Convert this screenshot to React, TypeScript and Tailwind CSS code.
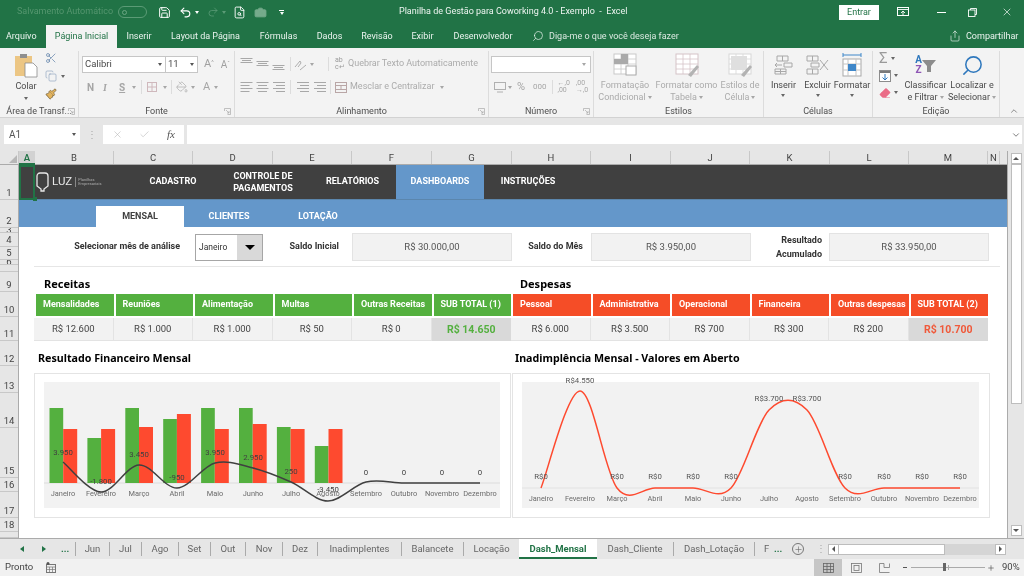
import { Camera, Check, ChevronDown, ChevronUp, Copy, Eraser, FileSearch, Paintbrush, PaintBucket, Plus, Redo2, Save, Scissors, Search, Share, Undo2, X } from 'lucide-react';

const ui = 'font-[Roboto,sans-serif]';

const months = ['Janeiro', 'Fevereiro', 'Março', 'Abril', 'Maio', 'Junho', 'Julho', 'Agosto', 'Setembro', 'Outubro', 'Novembro', 'Dezembro'];

// Excel style smoothing: catmull-rom turned into beziers
function smooth(p: number[][]) {
  let d = `M${p[0][0]} ${p[0][1]}`;
  for (let i = 0; i < p.length - 1; i++) {
    const a = p[Math.max(i - 1, 0)];
    const b = p[i];
    const c = p[i + 1];
    const e = p[Math.min(i + 2, p.length - 1)];
    d += ` C${b[0] + (c[0] - a[0]) / 6} ${b[1] + (c[1] - a[1]) / 6} ${c[0] - (e[0] - b[0]) / 6} ${c[1] - (e[1] - b[1]) / 6} ${c[0]} ${c[1]}`;
  }
  return d;
}

function Drop({ className = 'border-t-[#a6a6a6]' }: { className?: string }) {
  return <span className={`inline-block w-0 h-0 border-x-[2.5px] border-x-transparent border-t-[3px] ${className}`} />;
}

function Launcher() {
  return (
    <svg width="7" height="7" viewBox="0 0 7 7" className="absolute right-[3px] bottom-[2px]">
      <path d="M.5 3V.5H6.5V6.5H3.5M2 2l3 3M5 3v2H3" fill="none" stroke="#a9a9a9" strokeWidth=".7" />
    </svg>
  );
}

function Lines({ rows, align = 'left', tall = 14 }: { rows: number[]; align?: string; tall?: number }) {
  return (
    <svg width="13" height={tall} viewBox={`0 0 13 ${tall}`}>
      {rows.map((y, i) => {
        const w = i % 2 ? 9 : 12;
        const x = align === 'center' ? (13 - w) / 2 : align === 'right' ? 13 - w : 0.5;
        return <rect key={y} x={x} y={y} width={w} height="1" fill="#a8a8a8" />;
      })}
    </svg>
  );
}

function GridIcon({ tone = '#c9c9c9', fill = '#b5b5b5', children }: { tone?: string; fill?: string; children?: React.ReactNode }) {
  return (
    <svg width="24" height="24" viewBox="0 0 24 24">
      <rect x="1" y="1" width="22" height="20" fill="#fff" stroke={tone} strokeWidth="1" />
      <path d="M8 1v20M15 1v20M1 6h22M1 11h22M1 16h22" stroke={tone} strokeWidth=".8" />
      {children ?? <rect x="8" y="6" width="7" height="10" fill={fill} />}
    </svg>
  );
}

function Group({ w, title, launcher, children }: { w: string; title: string; launcher?: boolean; children: React.ReactNode }) {
  return (
    <div className={`relative ${w} h-full shrink-0 flex flex-col border-r border-[#dcdcdc]`}>
      <div className="flex-1 min-h-0">{children}</div>
      <div className="h-[11px] text-center text-[9px] leading-[11px] text-[#4d4d4d] whitespace-nowrap">{title}</div>
      {launcher && <Launcher />}
    </div>
  );
}

function BigButton({ w, lines, icon, dim, tail }: { w: string; lines: string[]; icon: React.ReactNode; dim?: boolean; tail?: boolean }) {
  return (
    <div className={`${w} shrink-0 flex flex-col items-center pt-[2px] text-[9px] leading-[12px] ${dim ? 'text-[#ababab]' : 'text-[#4a4a4a]'}`}>
      <div className="h-[24px] flex items-center justify-center">{icon}</div>
      <div className="mt-[2px] text-center whitespace-nowrap">{lines[0]}</div>
      <div className="text-center whitespace-nowrap flex items-center gap-[2px]">
        {lines[1]}
        {tail && <Drop />}
      </div>
    </div>
  );
}

function TitleBar() {
  return (
    <div className="h-[24px] flex items-center bg-[#217346] text-white text-[9px] relative">
      <span className="ml-[17px] w-[97px] whitespace-nowrap text-[#55966f]">Salvamento Automático</span>
      <span className="ml-[4px] w-[29px] h-[12px] rounded-full border border-[#5b9b76] flex items-center pl-[3px]">
        <span className="w-[5px] h-[5px] rounded-full border border-[#6aa582]" />
      </span>
      <Save size={13} strokeWidth={1.8} className="ml-[11px]" />
      <Undo2 size={13} strokeWidth={2} className="ml-[8px]" />
      <Drop className="ml-[3px] border-t-white" />
      <Redo2 size={12} strokeWidth={1.6} className="ml-[8px] text-[#5b9b76]" />
      <Drop className="ml-[3px] border-t-[#5b9b76]" />
      <FileSearch size={13} strokeWidth={1.7} className="ml-[7px]" />
      <Camera size={13} strokeWidth={1.7} className="ml-[8px] text-[#76ab8c]" fill="#76ab8c" />
      <span className="ml-[12px] flex flex-col items-center gap-[1px]">
        <span className="w-[5px] h-px bg-white" />
        <Drop className="border-t-white" />
      </span>
      <span className="ml-[115px] w-[232px] whitespace-nowrap text-[#eef5f1]">Planilha de Gestão para Coworking 4.0 - Exemplo&nbsp; -&nbsp; Excel</span>
      <span className="ml-[208px] w-[40px] h-[15px] bg-white text-[#217346] text-center leading-[15px]">Entrar</span>
      <svg width="12" height="10" viewBox="0 0 12 10" className="ml-[18px]" fill="none" stroke="#fff">
        <rect x=".5" y=".5" width="11" height="8" />
        <path d="M.5 2.5h11M6 8V4M4 6l2-2 2 2" strokeWidth=".9" />
      </svg>
      <span className="ml-[28px] w-[9px] h-px bg-white" />
      <svg width="9" height="9" viewBox="0 0 9 9" className="ml-[22px]" fill="none" stroke="#fff" strokeWidth=".9">
        <rect x=".5" y="2" width="6.5" height="6.5" />
        <path d="M2.5 2V.5H8.5V6.5H7" />
      </svg>
      <X size={12} strokeWidth={1.3} className="ml-[24px]" />
    </div>
  );
}

const tabs = [
  ['Inserir', 'w-[44px]'],
  ['Layout da Página', 'w-[89px]'],
  ['Fórmulas', 'w-[57px]'],
  ['Dados', 'w-[45px]'],
  ['Revisão', 'w-[50px]'],
  ['Exibir', 'w-[41px]'],
  ['Desenvolvedor', 'w-[80px]'],
];

function TabRow() {
  return (
    <div className="h-[24px] flex items-stretch bg-[#217346] text-[#eaf3ee] text-[9px]">
      <span className="ml-[6px] w-[40px] leading-[24px] whitespace-nowrap">Arquivo</span>
      <span className="w-[71px] mt-px bg-[#f3f3f3] text-[#217346] text-center leading-[23px] whitespace-nowrap">Página Inicial</span>
      {tabs.map(([t, w]) => (
        <span key={t} className={`${w} text-center leading-[24px] whitespace-nowrap`}>{t}</span>
      ))}
      <Search size={12} strokeWidth={1.4} className="ml-[9px] mt-[6px] -scale-x-100" />
      <span className="ml-[5px] w-[130px] leading-[24px] whitespace-nowrap text-[#dbe9e1]">Diga-me o que você deseja fazer</span>
      <Share size={12} strokeWidth={1.3} className="ml-[270px] mt-[6px]" />
      <span className="ml-[5px] leading-[24px] whitespace-nowrap">Compartilhar</span>
    </div>
  );
}

function Ribbon() {
  return (
    <div className="h-[70px] flex bg-[#f3f3f3] border-b border-[#d2d2d2] pt-[3px]">
      <Group w="w-[79px]" title="Área de Transf..." launcher>
        <div className="flex">
          <div className="w-[44px] flex flex-col items-center pt-[2px] pl-[8px] text-[9px] text-[#4a4a4a] leading-[12px]">
            <svg width="24" height="25" viewBox="0 0 24 25">
              <rect x="1" y="3" width="17" height="20" fill="#ecc684" />
              <rect x="6" y="1" width="7" height="4" fill="#8f8f8f" />
              <path d="M11 10h8l4 4v10H11z" fill="#fff" stroke="#8a8a8a" strokeWidth=".8" />
            </svg>
            <span className="mt-[2px]">Colar</span>
            <Drop className="mt-[5px] border-t-[#666]" />
          </div>
          <div className="flex flex-col items-start gap-[6px] pl-[1px] pt-[1px]">
            <Scissors size={12} strokeWidth={1.4} className="text-[#5d7fa8]" />
            <div className="flex items-center gap-[4px]"><Copy size={12} strokeWidth={1.1} className="text-[#7a95b3]" /><Drop className="border-t-[#666]" /></div>
            <Paintbrush size={12} strokeWidth={1.4} fill="#e3b35c" className="text-[#6d5a36]" />
          </div>
        </div>
      </Group>

      <Group w="w-[156px]" title="Fonte" launcher>
        <div className="pl-[3px] pt-[5px] text-[#4a4a4a]">
          <div className="flex items-center h-[17px] text-[9.5px]">
            <span className="w-[84px] h-full bg-white border border-[#c6c6c6] flex items-center justify-between px-[2px] pr-[3px]">Calibri <Drop className="border-t-[#555]" /></span>
            <span className="w-[32px] h-full bg-white border border-l-0 border-[#c6c6c6] flex items-center justify-between px-[2px] pr-[3px]">11 <Drop className="border-t-[#555]" /></span>
            <span className="ml-[6px] text-[11px] text-[#a0a0a0]">A<sup className="text-[6px]">^</sup></span>
            <span className="ml-[7px] text-[10px] text-[#a0a0a0]">A<sup className="text-[6px]">ˇ</sup></span>
          </div>
          <div className="flex items-center h-[16px] mt-[6px] text-[10px] text-[#a6a6a6] font-bold">
            <span className="ml-[5px] w-[16px]">N</span>
            <span className="w-[16px] italic font-['Liberation_Serif',serif]">I</span>
            <span className="w-[13px] underline">S</span>
            <Drop />
            <span className="ml-[5px] mr-[5px] w-px h-[14px] bg-[#dcdcdc]" />
            <svg width="10" height="10" viewBox="0 0 10 10" fill="none" stroke="#cfb8bc"><rect x=".5" y=".5" width="9" height="9" /><path d="M5 0v10M0 5h10" /></svg>
            <Drop className="ml-[6px] border-t-[#a6a6a6]" />
            <span className="ml-[4px] mr-[4px] w-px h-[14px] bg-[#dcdcdc]" />
            <PaintBucket size={12} strokeWidth={1.3} className="text-[#a6a6a6]" />
            <Drop className="ml-[3px] border-t-[#a6a6a6]" />
            <span className="ml-[8px] text-[11px] font-normal">A</span>
            <Drop className="ml-[4px] border-t-[#a6a6a6]" />
          </div>
        </div>
      </Group>

      <Group w="w-[254px]" title="Alinhamento" launcher>
        <div className="pl-[5px] pt-[3px] text-[9px] text-[#ababab] whitespace-nowrap">
          <div className="flex items-center h-[20px]">
            <span className="flex gap-[3px]">
              <Lines rows={[1, 3, 5]} align="center" />
              <Lines rows={[4, 6, 8]} align="center" />
              <Lines rows={[8, 10, 12]} align="center" />
            </span>
            <span className="ml-[5px] mr-[3px] w-px h-[14px] bg-[#dcdcdc]" />
            <svg width="13" height="13" viewBox="0 0 13 13" fill="none" stroke="#a6a6a6"><path d="M1 9l5-6 1 2-3 4M6 12l6-5" strokeWidth=".9" /></svg>
            <Drop className="ml-[3px] border-t-[#a6a6a6]" />
            <span className="ml-[14px] mr-[6px] w-px h-[14px] bg-[#dcdcdc]" />
            <span className="w-[10px] text-[7px] leading-[7px] text-[#9b9b9b]">ab<br />c↵</span>
            <span className="ml-[3px]">Quebrar Texto Automaticamente</span>
          </div>
          <div className="flex items-center h-[20px] mt-[3px]">
            <span className="flex gap-[3px]">
              <Lines rows={[2, 5, 8, 11]} />
              <Lines rows={[2, 5, 8, 11]} align="center" />
              <Lines rows={[2, 5, 8, 11]} align="right" />
            </span>
            <span className="ml-[5px] mr-[5px] w-px h-[14px] bg-[#dcdcdc]" />
            <span className="flex gap-[4px]">
              <Lines rows={[2, 5, 8, 11]} align="right" />
              <Lines rows={[2, 5, 8, 11]} align="right" />
            </span>
            <span className="ml-[4px] mr-[4px] w-px h-[14px] bg-[#dcdcdc]" />
            <svg width="12" height="11" viewBox="0 0 12 11" fill="none" stroke="#b9a6a6"><rect x=".5" y=".5" width="11" height="10" /><path d="M0 3.5h12M0 7.5h12M6 3.5v4" /></svg>
            <span className="ml-[3px]">Mesclar e Centralizar</span>
            <Drop className="ml-[6px] border-t-[#a6a6a6]" />
          </div>
        </div>
      </Group>

      <Group w="w-[105px]" title="Número" launcher>
        <div className="pl-[2px] pt-[5px] text-[#a6a6a6]">
          <div className="w-[100px] h-[17px] bg-white border border-[#c6c6c6] flex items-center justify-end pr-[4px]"><Drop /></div>
          <div className="flex items-center h-[16px] mt-[6px] text-[10px]">
            <svg width="12" height="11" viewBox="0 0 12 11" fill="none" stroke="#b0b0b0" className="ml-[3px]"><rect x=".5" y=".5" width="11" height="7" /><path d="M3 10h6" /></svg>
            <Drop className="ml-[2px] border-t-[#a6a6a6]" />
            <span className="ml-[5px] text-[11px]">%</span>
            <span className="ml-[8px] text-[8px]">000</span>
            <span className="ml-[5px] mr-[5px] w-px h-[14px] bg-[#dcdcdc]" />
            <span className="text-[7px] leading-[7px]">←,0<br />,00</span>
            <span className="ml-[6px] text-[7px] leading-[7px]">,00<br />→,0</span>
          </div>
        </div>
      </Group>

      <Group w="w-[170px]" title="Estilos">
        <div className="flex pl-[1px]">
          <BigButton w="w-[60px]" dim tail lines={['Formatação', 'Condicional']} icon={<GridIcon><rect x="8" y="1" width="7" height="5" fill="#aaa" /><rect x="1" y="6" width="14" height="5" fill="#aaa" /><rect x="13" y="13" width="10" height="9" fill="#fff" stroke="#aaa" /></GridIcon>} />
          <BigButton w="w-[63px]" dim tail lines={['Formatar como', 'Tabela']} icon={<GridIcon tone="#d5c4c8" fill="#e6dfe2"><path d="M13 22l9-10 2 2-8 10z" fill="#b3b3b3" /></GridIcon>} />
          <BigButton w="w-[44px]" dim tail lines={['Estilos de', 'Célula']} icon={<GridIcon tone="#d7d7d7"><rect x="3" y="3" width="16" height="14" fill="#dfdfdf" /><path d="M13 22l9-10 2 2-8 10z" fill="#b3b3b3" /></GridIcon>} />
        </div>
      </Group>

      <Group w="w-[109px]" title="Células">
        <div className="flex pl-[1px]">
          <BigButton w="w-[37px]" lines={['Inserir', '']} icon={
            <svg width="20" height="20" viewBox="0 0 20 20" fill="none" stroke="#a8a8a8"><path d="M3 1h11v5H3zM8.500 1v5M1 14h11v5H1zM6.500 14v5M1 16.500h11" /><path d="M10 8h8v4h-8zM1 10h7M3 8l-2 2 2 2" /></svg>
          } />
          <BigButton w="w-[31px]" lines={['Excluir', '']} icon={
            <svg width="24" height="20" viewBox="0 0 24 20" fill="none" stroke="#a8a8a8"><path d="M1 1h11v5H1zM6.500 1v5M1 14h11v5H1zM6.500 14v5M5 8h8v4H5zM14 5l8 10M22 5l-8 10" /></svg>
          } />
          <BigButton w="w-[38px]" lines={['Formatar', '']} icon={
            <svg width="22" height="24" viewBox="0 0 22 24"><path d="M2 2h18M2 0v4M20 0v4" stroke="#3f87c9" fill="none" /><rect x="2" y="6" width="18" height="17" fill="#fff" stroke="#a9a9a9" /><path d="M7 6v17M15 6v17M2 11h18M2 17h18" stroke="#c4c4c4" /><rect x="7" y="11" width="8" height="7" fill="#3f87c9" /></svg>
          } />
        </div>
        <div className="absolute left-0 top-[43px] w-full flex">
          <span className="w-[38px] flex justify-center"><Drop className="border-t-[#666]" /></span>
          <span className="w-[31px] flex justify-center"><Drop className="border-t-[#666]" /></span>
          <span className="w-[38px] flex justify-center"><Drop className="border-t-[#666]" /></span>
        </div>
      </Group>

      <Group w="w-[127px]" title="Edição">
        <div className="flex pl-[6px]">
          <div className="w-[23px] flex flex-col gap-[2px]">
            <div className="flex items-center gap-[3px] h-[15px]"><span className="text-[15px] leading-none text-[#9a9a9a]">Σ</span><Drop className="border-t-[#666]" /></div>
            <div className="flex items-center gap-[3px] h-[15px]">
              <svg width="12" height="12" viewBox="0 0 12 12"><rect x=".5" y=".5" width="11" height="11" fill="#fff" stroke="#8c8c8c" /><rect x="1" y="1" width="10" height="2" fill="#7a7a7a" /><path d="M6 4v6M3.500 7.500L6 10l2.500-2.500" stroke="#2f78bd" fill="none" /></svg>
              <Drop className="border-t-[#666]" />
            </div>
            <div className="flex items-center gap-[3px] h-[15px]"><Eraser size={12} fill="#ea6b86" strokeWidth={1} className="text-[#ea6b86]" /><Drop className="border-t-[#666]" /></div>
          </div>
          <BigButton w="w-[47px]" lines={['Classificar', 'e Filtrar']} tail icon={
            <span className="relative flex items-center">
              <span className="font-bold text-[10px] leading-[10px] text-center"><span className="text-[#2f78bd]">A</span><br /><span className="text-[#8e55b5]">Z</span></span>
              <svg width="14" height="13" viewBox="0 0 14 13"><path d="M0 1h14L9 7v6H5V7z" fill="#8c8c8c" /></svg>
            </span>
          } />
          <BigButton w="w-[46px]" lines={['Localizar e', 'Selecionar']} tail icon={<Search size={23} strokeWidth={1.6} className="-scale-x-100 text-[#2f78bd]" />} />
        </div>
      </Group>
      <div className="flex-1 relative">
        <ChevronUp size={10} strokeWidth={2} className="absolute left-[9px] bottom-[1px] text-[#777]" />
      </div>
    </div>
  );
}

function FormulaBar() {
  return (
    <div className="h-[33px] bg-[#e6e6e6] flex items-center pl-[4px] pr-[2px] text-[10px] text-[#555]">
      <span className="w-[76px] h-[19px] bg-white flex items-center justify-between pl-[5px] pr-[4px]">A1 <Drop className="border-t-[#555]" /></span>
      <span className="w-[23px] text-center text-[#aaa] leading-[5px] text-[10px]">⋮</span>
      <span className="w-[81px] h-[19px] bg-white flex items-center pl-[9px]">
        <X size={11} strokeWidth={1.2} className="text-[#b3b3b3]" />
        <Check size={11} strokeWidth={1.2} className="ml-[16px] text-[#b3b3b3]" />
        <span className="ml-[17px] italic font-['Liberation_Serif',serif] text-[11px]">fx</span>
      </span>
      <span className="ml-[3px] flex-1 h-[19px] bg-white flex items-center justify-end pr-[1px]"><ChevronDown size={10} className="text-[#666]" /></span>
    </div>
  );
}

const cols = [['B', 79], ['C', 79], ['D', 80], ['E', 79], ['F', 80], ['G', 80], ['H', 79], ['I', 80], ['J', 79], ['K', 80], ['L', 79], ['M', 79]] as const;
const colW: Record<number, string> = { 79: 'w-[79px]', 80: 'w-[80px]' };

function ColumnHeader() {
  return (
    <div className="h-[14px] flex bg-[#e6e6e6] text-[9.5px] leading-[13px] text-[#444] border-b border-[#ababab]">
      <span className="w-[19px] relative border-r border-[#c8c8c8]">
        <span className="absolute right-[1px] bottom-[1px] w-0 h-0 border-l-[8px] border-l-transparent border-b-[8px] border-b-[#b7b7b7]" />
      </span>
      <span className="w-[16px] bg-[#d2d2d2] border-b-2 border-[#217346] text-[#217346] text-center font-semibold h-[14px]">A</span>
      {cols.map(([c, w]) => (
        <span key={c} className={`${colW[w]} text-center border-r border-[#c8c8c8]`}>{c}</span>
      ))}
      <span className="w-[12px] text-center border-r border-[#c8c8c8]">N</span>
      <span className="flex-1" />
    </div>
  );
}

const rowHeads: [string, string][] = [
  ['1', 'h-[35px] leading-[12px]'], ['2', 'h-[28px] leading-[12px]'], ['3', 'h-[5px] leading-[5px]'], ['4', 'h-[14px] leading-[12px]'], ['5', 'h-[13px] leading-[12px]'], ['6', 'h-[5px] leading-[5px]'],
  ['', 'h-[7px]'], ['9', 'h-[20px] leading-[12px]'], ['10', 'h-[25px] leading-[12px]'], ['11', 'h-[24px] leading-[12px]'], ['12', 'h-[25px] leading-[12px]'], ['13', 'h-[27px] leading-[12px]'],
  ['14', 'h-[35px] leading-[12px]'], ['15', 'h-[50px] leading-[12px]'], ['16', 'h-[14px] leading-[12px]'], ['17', 'h-[26px] leading-[12px]'], ['18', 'h-[14px] leading-[12px]'], ['', 'h-[6px]'],
];

function RowHeaders() {
  return (
    <div className="w-[19px] shrink-0 bg-[#e6e6e6] border-r border-[#ababab] text-[9.5px] text-[#444] overflow-hidden">
      {rowHeads.map(([n, h], i) => (
        <div key={i} className={`${h} border-b border-[#c8c8c8] flex items-end justify-center overflow-hidden`}>{n}</div>
      ))}
    </div>
  );
}

const receitas = [['Mensalidades', 'R$ 12.600'], ['Reuniões', 'R$ 1.000'], ['Alimentação', 'R$ 1.000'], ['Multas', 'R$ 50'], ['Outras Receitas', 'R$ 0']];
const despesas = [['Pessoal', 'R$ 6.000'], ['Administrativa', 'R$ 3.500'], ['Operacional', 'R$ 700'], ['Financeira', 'R$ 300'], ['Outras despesas', 'R$ 200']];

function Kpi({ value }: { value: string }) {
  return <div className="w-[160px] h-[28px] bg-[#f2f2f2] border border-[#e3e3e3] flex items-center justify-center text-[9.5px] font-normal text-[#555]">{value}</div>;
}

function ResultChart() {
  const bars = [[408, 429], [438, 429], [408, 427], [419, 414], [408, 429], [408, 424], [427, 429], [446, 429]];
  const line = [[63, 462], [101, 492], [139, 465], [177, 488], [215, 463], [253, 468], [291, 482], [328, 501], [366, 482], [404, 483], [442, 483], [480, 483]];
  const labels = [['3.950', 452], ['-1.800', 481], ['3.450', 454], ['-950', 477], ['3.950', 452], ['2.950', 457], ['250', 471], ['-3.450', 489], ['0', 472], ['0', 472], ['0', 472], ['0', 472]] as const;
  return (
    <svg width="477" height="145" viewBox="34 373 477 145" className="bg-white outline outline-1 -outline-offset-1 outline-[#e4e4e4]">
      <rect x="44" y="382" width="456" height="126" fill="#f2f2f2" />
      <line x1="44" x2="500" y1="483" y2="483" stroke="#dcdcdc" />
      {bars.map(([g, r], i) => (
        <g key={i}>
          <rect x={49.5 + i * 37.9} y={g} width="13.7" height={483 - g} fill="#54b03f" />
          <rect x={63.2 + i * 37.9} y={r} width="14" height={483 - r} fill="#fe4a2f" />
        </g>
      ))}
      {labels.map(([t, y], i) => (
        <text key={i} x={line[i][0]} y={y + 3} textAnchor="middle" fontSize="7.8" fill="#404040">{t}</text>
      ))}
      {months.map((m, i) => (
        <text key={m} x={line[i][0]} y="496" textAnchor="middle" fontSize="7.4" fill="#6b6b6b">{m}</text>
      ))}
      <path d={smooth(line)} fill="none" stroke="#404040" strokeWidth="1.500" />
    </svg>
  );
}

function DebtChart() {
  const xs = [541, 580, 617, 655, 693, 731, 769, 807, 845, 884, 922, 960];
  const ys = [488, 391, 488, 488, 488, 488, 410, 410, 488, 488, 488, 488];
  const line = xs.map((x, i) => [x, ys[i]]);
  return (
    <svg width="478" height="145" viewBox="512 373 478 145" className="bg-white outline outline-1 -outline-offset-1 outline-[#e4e4e4]">
      <rect x="522" y="382" width="457" height="126" fill="#f2f2f2" />
      <line x1="522" x2="979" y1="488" y2="488" stroke="#e2e2e2" />
      <path d={smooth(line)} fill="none" stroke="#fe4a2f" strokeWidth="1.500" />
      {xs.map((x, i) => {
        const big = ys[i] !== 488;
        return (
          <text key={x} x={x} y={i === 1 ? 383 : big ? 401 : 479} textAnchor="middle" fontSize="7.8" fill="#555">
            {i === 1 ? 'R$4.550' : big ? 'R$3.700' : 'R$0'}
          </text>
        );
      })}
      {months.map((m, i) => (
        <text key={m} x={xs[i]} y="501" textAnchor="middle" fontSize="7.4" fill="#6b6b6b">{m}</text>
      ))}
    </svg>
  );
}

function Sheet() {
  return (
    <div className="flex-1 min-w-0 bg-white relative overflow-hidden">
      {/* menu */}
      <div className="h-[35px] bg-[#404040] flex items-stretch border-b border-[#5b86ad] text-white text-[9px] font-bold">
        <div className="w-[16px]" />
        <div className="w-[98px] flex items-center">
          <svg width="15" height="22" viewBox="0 0 15 22" fill="none" stroke="#e8e8e8" strokeWidth="1.300"><path d="M2 15V5a3 3 0 013-3h5a3 3 0 013 3v10l-4 3v2H6v-2z" /></svg>
          <span className="ml-[2px] text-[11.500px] font-normal text-[#e8e8e8]">LUZ</span>
          <span className="ml-[3px] h-[10px] w-px bg-[#888]" />
          <span className="ml-[2px] text-[4px] leading-[4px] font-normal text-[#aaa]">Planilhas<br />Empresariais</span>
        </div>
        <span className="w-[80px] flex items-center justify-center">CADASTRO</span>
        <span className="ml-[11px] w-[78px] flex items-center justify-center text-center leading-[12px]">CONTROLE DE PAGAMENTOS</span>
        <span className="ml-[22px] w-[57px] flex items-center justify-center">RELATÓRIOS</span>
        <span className="ml-[15px] w-[88px] bg-[#6497ca] flex items-center justify-center">DASHBOARDS</span>
        <span className="w-[88px] flex items-center justify-center">INSTRUÇÕES</span>
      </div>
      {/* sub menu */}
      <div className="h-[27px] bg-[#6497ca] flex items-end pl-[77px] text-white text-[9px] font-bold">
        <span className="w-[88px] h-[21px] bg-white text-[#404040] flex items-center justify-center">MENSAL</span>
        <span className="w-[90px] h-[21px] flex items-center justify-center">CLIENTES</span>
        <span className="w-[88px] h-[21px] flex items-center justify-center">LOTAÇÃO</span>
      </div>
      {/* filtros */}
      <div className="mt-[6px] h-[28px] flex items-center text-[9px] font-bold text-[#333]">
        <span className="w-[161px] text-right whitespace-nowrap">Selecionar mês de análise</span>
        <span className="ml-[15px] w-[68px] h-[27px] bg-white border border-[#a6a6a6] flex items-center font-normal text-[8.500px]">
          <span className="flex-1 pl-[3px]">Janeiro</span>
          <span className="w-[25px] h-full bg-[#d9d9d9] flex items-center justify-center">
            <span className="w-0 h-0 border-x-[5px] border-x-transparent border-t-[5px] border-t-black" />
          </span>
        </span>
        <span className="w-[76px] text-right whitespace-nowrap">Saldo Inicial</span>
        <span className="ml-[13px]"><Kpi value="R$ 30.000,00" /></span>
        <span className="w-[71px] text-right whitespace-nowrap">Saldo do Mês</span>
        <span className="ml-[8px]"><Kpi value="R$ 3.950,00" /></span>
        <span className="w-[71px] text-right leading-[14px]">Resultado Acumulado</span>
        <span className="ml-[7px]"><Kpi value="R$ 33.950,00" /></span>
      </div>
      <div className="mt-[5px] ml-[15px] mr-[7px] h-px bg-[#e6e6e6]" />
      {/* tabelas */}
      <div className="mt-[9px] h-[16px] flex items-center text-[11px] font-bold text-black font-['Noto_Sans',sans-serif]">
        <span className="ml-[25px] w-[476px]">Receitas</span>
        <span>Despesas</span>
      </div>
      <div className="mt-[2px] ml-[17px] grid grid-cols-[repeat(12,79.5px)] text-[9px] font-bold text-white">
        {receitas.map(([t]) => (
          <div key={t} className="h-[22px] mr-[2px] bg-[#54b03f] pl-[7px] flex items-center whitespace-nowrap">{t}</div>
        ))}
        <div className="h-[22px] mr-[2px] bg-[#54b03f] pl-[7px] flex items-center whitespace-nowrap">SUB TOTAL (1)</div>
        {despesas.map(([t]) => (
          <div key={t} className="h-[22px] mr-[2px] bg-[#f54d27] pl-[7px] flex items-center whitespace-nowrap">{t}</div>
        ))}
        <div className="h-[22px] mr-[2px] bg-[#f54d27] pl-[7px] flex items-center whitespace-nowrap">SUB TOTAL (2)</div>
      </div>
      <div className="mt-[2px] ml-[15px] grid grid-cols-[repeat(12,79.5px)] text-[9.5px] text-[#444] h-[23px]">
        {receitas.map(([t, v]) => (
          <div key={t} className="bg-[#f2f2f2] border-r border-b border-[#e3e3e3] flex items-center justify-center">{v}</div>
        ))}
        <div className="bg-[#d9d9d9] flex items-center justify-center font-bold text-[#54b03f] text-[10.500px]">R$ 14.650</div>
        {despesas.map(([t, v]) => (
          <div key={t} className="bg-[#f2f2f2] border-r border-b border-[#e3e3e3] flex items-center justify-center">{v}</div>
        ))}
        <div className="bg-[#d9d9d9] flex items-center justify-center font-bold text-[#f0593a] text-[10.500px]">R$ 10.700</div>
      </div>
      {/* graficos */}
      <div className="mt-[9px] h-[16px] flex items-center text-[10.700px] font-bold text-black font-['Noto_Sans',sans-serif]">
        <span className="ml-[19px] w-[477px] whitespace-nowrap">Resultado Financeiro Mensal</span>
        <span className="whitespace-nowrap">Inadimplência Mensal - Valores em Aberto</span>
      </div>
      <div className="mt-[7px] ml-[15px] flex gap-px">
        <ResultChart />
        <DebtChart />
      </div>
      {/* celula ativa A1 */}
      <div className="absolute left-0 top-0 w-[16px] h-[35px] border-2 border-[#217346]">
        <span className="absolute -right-[4px] -bottom-[3px] w-[4px] h-[4px] bg-[#217346]" />
      </div>
    </div>
  );
}

function ScrollBar() {
  return (
    <div className="w-[17px] shrink-0 bg-[#e6e6e6] border-l border-[#ababab] flex flex-col items-center -mt-[14px]">
      <span className="w-[11px] h-[11px] mt-[2px] bg-white border border-[#bdbdbd] flex items-center justify-center"><span className="w-0 h-0 border-x-[3px] border-x-transparent border-b-[3px] border-b-[#555]" /></span>
      <span className="w-[11px] h-[240px] bg-white border border-[#bdbdbd]" />
      <span className="flex-1" />
      <span className="w-[11px] h-[11px] mb-[2px] bg-white border border-[#bdbdbd] flex items-center justify-center"><span className="w-0 h-0 border-x-[3px] border-x-transparent border-t-[3px] border-t-[#555]" /></span>
    </div>
  );
}

const sheetTabs = [
  ['Jun', 'w-[34px]'], ['Jul', 'w-[32px]'], ['Ago', 'w-[37px]'], ['Set', 'w-[32px]'], ['Out', 'w-[35px]'], ['Nov', 'w-[37px]'], ['Dez', 'w-[35px]'],
  ['Inadimplentes', 'w-[84px]'], ['Balancete', 'w-[62px]'],
];

function SheetTabs() {
  return (
    <div className="h-[21px] bg-[#e6e6e6] border-t border-[#ababab] flex items-center text-[9.5px] text-[#666]">
      <span className="ml-[20px] w-0 h-0 border-y-[3px] border-y-transparent border-r-[4px] border-r-[#217346]" />
      <span className="ml-[18px] w-0 h-0 border-y-[3px] border-y-transparent border-l-[4px] border-l-[#217346]" />
      <span className="ml-[15px] w-[13px] font-bold text-[#217346] leading-[8px]">...</span>
      <span className="ml-[1px] h-[14px] w-px bg-[#aaa]" />
      {sheetTabs.map(([t, w]) => (
        <span key={t} className={`${w} h-[14px] text-center leading-[14px] border-r border-[#aaa] whitespace-nowrap`}>{t}</span>
      ))}
      <span className="w-[55px] text-center whitespace-nowrap">Locação</span>
      <span className="w-[78px] h-[20px] -mt-px bg-white border-b-2 border-[#217346] font-bold text-[#217346] text-center leading-[19px]">Dash_Mensal</span>
      <span className="w-[77px] h-[14px] text-center leading-[14px] border-r border-[#aaa] whitespace-nowrap">Dash_Cliente</span>
      <span className="w-[81px] h-[14px] text-center leading-[14px] border-r border-[#aaa] whitespace-nowrap">Dash_Lotação</span>
      <span className="ml-[9px] w-[8px]">F</span>
      <span className="ml-[2px] w-[14px] font-bold text-[#217346] leading-[8px]">...</span>
      <span className="ml-[4px] w-[12px] h-[12px] rounded-full border border-[#777] flex items-center justify-center"><Plus size={9} strokeWidth={1.6} /></span>
      <span className="ml-[12px] w-[4px] text-[#aaa]">⋮</span>
      <span className="ml-[8px] w-[178px] h-[11px] flex bg-[#d5d5d5]">
        <span className="w-[11px] bg-white border border-[#bdbdbd] flex items-center justify-center"><span className="w-0 h-0 border-y-[3px] border-y-transparent border-r-[3px] border-r-[#555]" /></span>
        <span className="w-[106px] bg-white border-y border-r border-[#bdbdbd]" />
        <span className="flex-1" />
        <span className="w-[11px] bg-white border border-[#bdbdbd] flex items-center justify-center"><span className="w-0 h-0 border-y-[3px] border-y-transparent border-l-[3px] border-l-[#555]" /></span>
      </span>
    </div>
  );
}

function StatusBar() {
  return (
    <div className="h-[17px] bg-[#f1f1f1] flex items-center text-[9.5px] text-[#444]">
      <span className="ml-[5px] w-[41px]">Pronto</span>
      <svg width="10" height="11" viewBox="0 0 10 11" fill="none" stroke="#777"><rect x=".5" y="2.500" width="9" height="8" /><path d="M0 5h10M3.500 5v5M6.500 5v5M0 7.500h10" strokeWidth=".7" /><circle cx="2" cy="1.500" r="1.500" fill="#555" stroke="none" /></svg>
      <span className="ml-[758px] w-[28px] h-full bg-[#c6c6c6] flex items-center justify-center">
        <svg width="11" height="10" viewBox="0 0 11 10" fill="none" stroke="#666" strokeWidth=".8"><rect x=".5" y=".5" width="10" height="9" /><path d="M4 0v10M7.500 0v10M0 3.500h11M0 6.500h11" /></svg>
      </span>
      <svg width="11" height="10" viewBox="0 0 11 10" fill="none" stroke="#777" strokeWidth=".8" className="ml-[9px]"><rect x=".5" y=".5" width="10" height="9" /><rect x="3" y="2.500" width="5" height="5" /></svg>
      <svg width="11" height="10" viewBox="0 0 11 10" fill="none" stroke="#777" strokeWidth=".8" className="ml-[17px]"><path d="M.5 9.500V.5H5V4.500H10.500V.5M.5 9.500h10" /></svg>
      <span className="ml-[13px] w-[4px] h-px bg-[#555]" />
      <span className="ml-[4px] w-[74px] h-px bg-[#aaa] relative">
        <span className="absolute left-[32px] -top-[4px] w-[3px] h-[8px] bg-[#666]" />
        <span className="absolute left-[37px] -top-[2px] w-px h-[5px] bg-[#aaa]" />
      </span>
      <Plus size={8} strokeWidth={2} className="ml-[2px] text-[#555]" />
      <span className="ml-[7px]">90%</span>
    </div>
  );
}

export default function App() {
  return (
    <div className={`w-[1024px] h-[576px] overflow-hidden flex flex-col bg-[#e6e6e6] ${ui} blur-[0.5px]`}>
      <TitleBar />
      <TabRow />
      <Ribbon />
      <FormulaBar />
      <ColumnHeader />
      <div className="flex-1 min-h-0 flex">
        <RowHeaders />
        <Sheet />
        <ScrollBar />
      </div>
      <SheetTabs />
      <StatusBar />
    </div>
  );
}
